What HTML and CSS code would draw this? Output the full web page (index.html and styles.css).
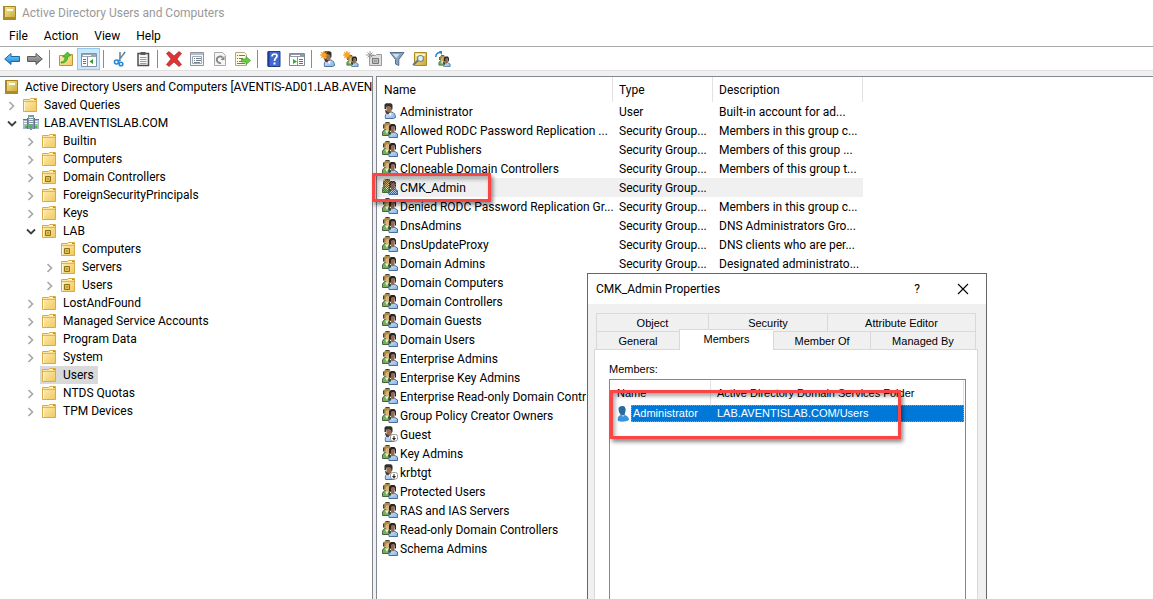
FILE: index.html
```html
<!DOCTYPE html>
<html lang="en">
<head>
<meta charset="utf-8">
<title>Active Directory Users and Computers</title>
<link rel="stylesheet" href="styles.css">
</head>
<body>
<svg class="sprite" aria-hidden="true">
  <defs>
    <linearGradient id="g-folder" x1="0" y1="0" x2="1" y2="1"><stop offset="0" stop-color="#fff0b8"/><stop offset="1" stop-color="#f0c860"/></linearGradient>
    <linearGradient id="g-shirt" x1="0" y1="0" x2="1" y2="1"><stop offset="0" stop-color="#d8ecff"/><stop offset="1" stop-color="#7fb0e6"/></linearGradient>
    <linearGradient id="g-blue" x1="0" y1="0" x2="0" y2="1"><stop offset="0" stop-color="#7fd0fa"/><stop offset="1" stop-color="#1580d4"/></linearGradient>
    <linearGradient id="g-gray" x1="0" y1="0" x2="0" y2="1"><stop offset="0" stop-color="#b4b4b4"/><stop offset="1" stop-color="#6c6c6c"/></linearGradient>
    <linearGradient id="g-book" x1="0" y1="0" x2="1" y2="1"><stop offset="0" stop-color="#f5e6a0"/><stop offset="1" stop-color="#c9a632"/></linearGradient>
    <pattern id="p-dots" width="2" height="2" patternUnits="userSpaceOnUse"><path d="M0 0h1v1H0zM1 1h1v1H1z" fill="#0d6fce"/></pattern>
  </defs>
  <symbol id="book" viewBox="0 0 16 16"><path d="M2 1.5h11.5v13H2z" fill="url(#g-book)" stroke="#a5841f"/><path d="M1 1h2v14H1z" fill="#a88a28"/><path d="M3 12h11v2.5H3z" fill="#b08c20"/><path d="M5 4h6v2H5z" fill="#fffdf0"/></symbol>
  <symbol id="folder" viewBox="0 0 16 16"><path d="M.5 2.5h6l1-1h6v13H.5z" fill="url(#g-folder)" stroke="#d9aa48"/><path d="M8 2h5v1H8z" fill="#fff"/><path d="M11 2h2v1h-2z" fill="#4aa0e8"/><path d="M1 4.5h12" stroke="#e0b755"/><path d="M1.5 5v9" stroke="#fff6d4"/></symbol>
  <symbol id="ou" viewBox="0 0 16 16"><use href="#folder"/><path d="M3.5 7.5h5v5h-5z" fill="#e0c04c" stroke="#8d721c"/><path d="M5.5 9.5h1v1h-1z" fill="#fff3b0" stroke="#a58528" stroke-width=".7"/></symbol>
  <symbol id="domain" viewBox="0 0 16 16"><path d="M5 0h6v14H5z" fill="#8198a8"/><path d="M0 4h5v10H0zM11 4h5v10h-5z" fill="#a7b7c1"/><path d="M6 2.500h4M6 4.500h4M6 6.500h4M6 8.500h4M1 6.500h3M1 8.500h3M12 6.500h3M12 8.500h3" stroke="#eef5f9"/><path d="M4.500 3v11M11.500 3v11M0 4.500h5M11 4.500h5" stroke="#5f7787"/><path d="M2 11h2v2H2zM7 11h2v2H7zM12 11h2v2h-2zM7 14h2v1H7z" fill="#37c62c"/></symbol>
  <symbol id="open" viewBox="0 0 16 16"><path d="M4 6.500l4 4 4-4" fill="none" stroke="#404040" stroke-width="1.800"/></symbol>
  <symbol id="closed" viewBox="0 0 16 16"><path d="M5.500 5l4 4-4 4" fill="none" stroke="#a6a6a6" stroke-width="1.600"/></symbol>
  <symbol id="user" viewBox="0 0 16 16"><path d="M3.500 15.500c-.8-3 .2-5.500 3-6.500h3c3 .500 4 3 4 5.500l-2 1z" fill="url(#g-shirt)" stroke="#41648f" stroke-width=".9"/><path d="M4.500 2.500h5v5.500l-1.500 2.500-2-.500-1.500-3z" fill="#9a7052"/><path d="M2.500 1.500L4 .300h5l1.500 1.500v4l-1 1.700L9 4 7 3 4.500 3.500 4 6H2.500z" fill="#30302e"/><path d="M3 6.500l2 1.500 2.500 2-1.500 1.500-2.500-2z" fill="#4c3a2e"/><path d="M7 10.500l1.200 3 1.300-3.500z" fill="#fff"/></symbol>
  <symbol id="group" viewBox="0 0 16 16"><path d="M.500 13.500V10l2-2.500h5v6z" fill="#78ad5a" stroke="#355c2b" stroke-width=".9"/><path d="M3 2h5v5.500L6 9 3.500 7.500z" fill="#deb17a"/><path d="M1.500 6.500v-4L3.500.500h4l1 1.500v2L6 3 4 3.500 3.500 7z" fill="#a58d4e"/><path d="M1 2.500h1.200v4H1zM3.500 0h4v1h-4z" fill="#453f2e"/><path d="M3 8.500L5 12l1.500-3.500z" fill="#e9f3d8"/><path d="M7 15.500l-.300-3L9 10h3l3.500 2v3.500z" fill="url(#g-shirt)" stroke="#3d6290" stroke-width=".9"/><path d="M8.500 4.500h4v5L11 11.500 9 10z" fill="#98664a"/><path d="M7 8V4l2-2h3.500L14 4v4l-1 1-.500-4.500L10 4.500 9 5v4z" fill="#29241f"/><path d="M7 9l2.500 2-1.500 2.500L6 11z" fill="#2f4f2c"/></symbol>
  <symbol id="group-hot" viewBox="0 0 16 16"><use href="#group"/><path d="M1 6V2l2-2h4l2 2h3l2 3v5l2 2v4H7l-1-2H0v-4z" fill="url(#p-dots)"/></symbol>
  <symbol id="user-off" viewBox="0 0 16 16"><use href="#user"/><rect x="8.500" y="8.500" width="7" height="6.500" rx="2" fill="#fff" stroke="#9a9a9a"/><path d="M11.500 10h1v2H14l-2 2.500L10 12h1.500z" fill="#222"/></symbol>
  <symbol id="member" viewBox="0 0 16 16"><path d="M3 15c-1-4 1-6 4-6h3c3 1 4 3 4 5-3 2-8 2-11 1z" fill="#3c93dc"/><path d="M3.500 3c0-2 1.500-3 4-3s3.500 2 3 5L9.500 9.500H6L4 6z" fill="#296b9e"/><path d="M6 9l2 2 2-2" fill="#8ccaf8"/></symbol>
  <symbol id="back" viewBox="0 0 16 16"><path d="M.7 8L7 2.500v3h8.500v5H7v3z" fill="url(#g-blue)" stroke="#1a69a8"/></symbol>
  <symbol id="forward" viewBox="0 0 16 16"><path d="M15.300 8L9 2.500v3H.500v5H9v3z" fill="url(#g-gray)" stroke="#5b5b5b"/></symbol>
  <symbol id="up" viewBox="0 0 16 16"><path d="M1.500 4.500h6l1-1h6v11h-13z" fill="url(#g-folder)" stroke="#c39436"/><path d="M3 11c3 0 4-2 4-5H4.500L9.500 1l3.500 3.500-3 1C9.500 10 7 12.500 3 12z" fill="#55c829" stroke="#2e8b1b" stroke-width=".6"/></symbol>
  <symbol id="panes" viewBox="0 0 16 16"><path d="M.500 2.500h15v13H.500z" fill="#fff" stroke="#8493a0"/><path d="M1 3h14v3H1z" fill="#9aa8b3"/><path d="M2 4.500h8" stroke="#fff"/><path d="M6.500 6v9" stroke="#8493a0"/><path d="M2 8.500h3M2 10.500h3M2 12.500h3" stroke="#51789c"/><path d="M12 8v5l-3.500-2.500z" fill="#2ca322"/></symbol>
  <symbol id="cut" viewBox="0 0 16 16"><path d="M8 1v9M13 1L6 11" stroke="#5d7b95" stroke-width="1.500" fill="none"/><path d="M12.500 3L8 9" stroke="#bcd4e6" stroke-width=".8"/><circle cx="4.500" cy="11" r="2" fill="none" stroke="#1e8be0" stroke-width="1.600"/><circle cx="9" cy="13" r="1.800" fill="none" stroke="#1e8be0" stroke-width="1.600"/></symbol>
  <symbol id="clip" viewBox="0 0 16 16"><path d="M3 2.500h10.500v12H3z" fill="#f6f6f6" stroke="#4e4e4e" stroke-width="1.500"/><path d="M5.500 1h5v3h-5z" fill="#595959"/><path d="M5 6.500h6.500M5 8.500h6.500M5 10.500h6.500M5 12.500h6.500" stroke="#9c9c9c"/></symbol>
  <symbol id="delete" viewBox="0 0 16 16"><path d="M.500 2.500L3 .500 8 5 13 .500l2.500 2L11 8l4.500 5.500-2.500 2L8 11l-5 4.500L.500 13.500 5 8z" fill="#dc3535" stroke="#ad2525" stroke-width=".7"/></symbol>
  <symbol id="props" viewBox="0 0 16 16"><path d="M1.500 1.500h13v13h-13z" fill="#f5f7f9" stroke="#8c959d"/><path d="M2 2h12v2H2z" fill="#b4bec6"/><path d="M3.500 5.500h9v7h-9z" fill="#fff" stroke="#a1a9af"/><path d="M5 7.500h1M7 7.500h5M5 9.500h1M7 9.500h5M5 11.500h6" stroke="#71808c"/></symbol>
  <symbol id="refresh" viewBox="0 0 16 16"><path d="M2.500 1.500h8l3 3v10h-11z" fill="#f5f5f5" stroke="#aaa"/><path d="M10.500 6.500A3.300 3.300 0 1 0 9 12" fill="none" stroke="#858585" stroke-width="1.800"/><path d="M8.500 9h4V5z" fill="#858585"/></symbol>
  <symbol id="export" viewBox="0 0 16 16"><path d="M.500 1.500h9l2 2v11H.500z" fill="#fffce5" stroke="#b1a984"/><path d="M2 4.500h1M4 4.500h6M2 7.500h1M4 7.500h4M2 10.500h1M4 10.500h4M2 12.500h8" stroke="#7c7660"/><path d="M6.500 8H11V5.500l4.500 4-4.500 4V11H6.500z" fill="#67cf35" stroke="#37992a" stroke-width=".7"/></symbol>
  <symbol id="help" viewBox="0 0 16 16"><path d="M2 .500h12v15H2z" fill="#4169d1" stroke="#213f86"/><path d="M1.500 1h2v14h-2z" fill="#1c3d92"/><path d="M6 5.500c0-3.500 5-3 5-.500C11 7 8.500 7 8.500 10" fill="none" stroke="#fff" stroke-width="1.700"/><path d="M7.500 11.500h2v2h-2z" fill="#fff"/></symbol>
  <symbol id="window" viewBox="0 0 16 16"><path d="M.500 2.500h15v12H.500z" fill="#fff" stroke="#7e8c97"/><path d="M1 3h14v3H1z" fill="#8f9ca6"/><path d="M2 4.500h9" stroke="#fff"/><path d="M4 8v5l4-2.500z" fill="#35ac28"/><path d="M8.500 6v9" stroke="#8d9aa4"/><path d="M10 8.500h4M10 10.500h4M10 12.500h4" stroke="#5d7386"/></symbol>
  <symbol id="star" viewBox="0 0 8 8"><path d="M4 0l.8 2.200L7 1 5.800 3.200 8 4l-2.200.8L7 7 4.800 5.800 4 8l-.8-2.200L1 7l1.200-2.200L0 4l2.200-.8L1 1l2.200 1.200z" fill="#ffa51c" stroke="#e88a00" stroke-width=".4"/></symbol>
  <symbol id="new-user" viewBox="0 0 16 16"><use href="#user" x="1" width="16" height="16"/><use href="#star" width="8" height="8"/></symbol>
  <symbol id="new-group" viewBox="0 0 16 16"><use href="#group" x="3" y="4" width="13" height="12"/><use href="#star" width="8" height="8"/></symbol>
  <symbol id="new-ou" viewBox="0 0 16 16"><path d="M3.500 4.500h6l1-1h5v11h-12z" fill="#ddd" stroke="#999"/><path d="M6.500 7.500h6v5h-6z" fill="#bcbcbc" stroke="#777"/><path d="M8.500 9.500h2v1h-2z" fill="#fff" stroke="#777" stroke-width=".6"/><path d="M4 0v8M0 4h8M1.500 1.500l5 5M6.500 1.500l-5 5" stroke="#999"/></symbol>
  <symbol id="filter" viewBox="0 0 16 16"><path d="M1 1.500h14L9.800 8.500v6L6.500 13V8.500z" fill="#87a3bd" stroke="#56718b"/><path d="M3.500 3h7L7.500 7z" fill="#cfe0ee"/></symbol>
  <symbol id="find" viewBox="0 0 16 16"><path d="M2.500 1.500h12v13h-12z" fill="url(#g-book)" stroke="#b08a1f"/><path d="M4 3h9v2H4z" fill="#fff6cb"/><path d="M6 9.500L1 14" stroke="#68747d" stroke-width="2"/><circle cx="8.500" cy="7.500" r="3" fill="#e3f1fb" stroke="#7a8790" stroke-width="1.200"/></symbol>
  <symbol id="add-to" viewBox="0 0 16 16"><use href="#group" x="3" y="4" width="13" height="12"/><path d="M.8 6c0-4 3-5 5-4" fill="none" stroke="#2b82c4" stroke-width="1.500"/><path d="M4 0h3v4z" fill="#2b82c4"/></symbol>
</svg>

<div class="app">
  <header class="titlebar"><svg class="icon"><use href="#book"/></svg><span>Active Directory Users and Computers</span></header>
  <nav class="menubar"><button>File</button><button>Action</button><button>View</button><button>Help</button></nav>
  <div class="toolbar" role="toolbar">
    <div class="tools"><button aria-label="Back"><svg class="icon"><use href="#back"/></svg></button><button aria-label="Forward"><svg class="icon"><use href="#forward"/></svg></button></div>
    <div class="tools"><button aria-label="Up one level"><svg class="icon"><use href="#up"/></svg></button><button class="pressed" aria-label="Show console tree"><svg class="icon"><use href="#panes"/></svg></button></div>
    <div class="tools"><button aria-label="Cut"><svg class="icon"><use href="#cut"/></svg></button><button aria-label="Paste"><svg class="icon"><use href="#clip"/></svg></button></div>
    <div class="tools"><button aria-label="Delete"><svg class="icon"><use href="#delete"/></svg></button><button aria-label="Properties"><svg class="icon"><use href="#props"/></svg></button><button aria-label="Refresh"><svg class="icon"><use href="#refresh"/></svg></button><button aria-label="Export list"><svg class="icon"><use href="#export"/></svg></button></div>
    <div class="tools"><button aria-label="Help topics"><svg class="icon"><use href="#help"/></svg></button><button aria-label="Action pane"><svg class="icon"><use href="#window"/></svg></button></div>
    <div class="tools"><button aria-label="New user"><svg class="icon"><use href="#new-user"/></svg></button><button aria-label="New group"><svg class="icon"><use href="#new-group"/></svg></button><button aria-label="New organizational unit"><svg class="icon"><use href="#new-ou"/></svg></button><button aria-label="Filter"><svg class="icon"><use href="#filter"/></svg></button><button aria-label="Find"><svg class="icon"><use href="#find"/></svg></button><button aria-label="Add to group"><svg class="icon"><use href="#add-to"/></svg></button></div>
  </div>

  <main class="panes">
    <nav class="tree">
      <div class="row root"><span class="node"><svg class="icon"><use href="#book"/></svg>Active Directory Users and Computers [AVENTIS-AD01.LAB.AVENT</span></div>
      <ul>
        <li><div class="row"><button class="toggle" aria-label="Expand"><svg class="icon"><use href="#closed"/></svg></button><span class="node"><svg class="icon"><use href="#folder"/></svg>Saved Queries</span></div></li>
        <li><div class="row"><button class="toggle" aria-label="Collapse"><svg class="icon"><use href="#open"/></svg></button><span class="node"><svg class="icon"><use href="#domain"/></svg>LAB.AVENTISLAB.COM</span></div>
          <ul>
            <li><div class="row"><button class="toggle" aria-label="Expand"><svg class="icon"><use href="#closed"/></svg></button><span class="node"><svg class="icon"><use href="#folder"/></svg>Builtin</span></div></li>
            <li><div class="row"><button class="toggle" aria-label="Expand"><svg class="icon"><use href="#closed"/></svg></button><span class="node"><svg class="icon"><use href="#folder"/></svg>Computers</span></div></li>
            <li><div class="row"><button class="toggle" aria-label="Expand"><svg class="icon"><use href="#closed"/></svg></button><span class="node"><svg class="icon"><use href="#ou"/></svg>Domain Controllers</span></div></li>
            <li><div class="row"><button class="toggle" aria-label="Expand"><svg class="icon"><use href="#closed"/></svg></button><span class="node"><svg class="icon"><use href="#folder"/></svg>ForeignSecurityPrincipals</span></div></li>
            <li><div class="row"><button class="toggle" aria-label="Expand"><svg class="icon"><use href="#closed"/></svg></button><span class="node"><svg class="icon"><use href="#folder"/></svg>Keys</span></div></li>
            <li><div class="row"><button class="toggle" aria-label="Collapse"><svg class="icon"><use href="#open"/></svg></button><span class="node"><svg class="icon"><use href="#ou"/></svg>LAB</span></div>
              <ul>
                <li><div class="row"><span class="toggle"></span><span class="node"><svg class="icon"><use href="#ou"/></svg>Computers</span></div></li>
                <li><div class="row"><button class="toggle" aria-label="Expand"><svg class="icon"><use href="#closed"/></svg></button><span class="node"><svg class="icon"><use href="#ou"/></svg>Servers</span></div></li>
                <li><div class="row"><button class="toggle" aria-label="Expand"><svg class="icon"><use href="#closed"/></svg></button><span class="node"><svg class="icon"><use href="#ou"/></svg>Users</span></div></li>
              </ul>
            </li>
            <li><div class="row"><button class="toggle" aria-label="Expand"><svg class="icon"><use href="#closed"/></svg></button><span class="node"><svg class="icon"><use href="#folder"/></svg>LostAndFound</span></div></li>
            <li><div class="row"><button class="toggle" aria-label="Expand"><svg class="icon"><use href="#closed"/></svg></button><span class="node"><svg class="icon"><use href="#folder"/></svg>Managed Service Accounts</span></div></li>
            <li><div class="row"><button class="toggle" aria-label="Expand"><svg class="icon"><use href="#closed"/></svg></button><span class="node"><svg class="icon"><use href="#folder"/></svg>Program Data</span></div></li>
            <li><div class="row"><button class="toggle" aria-label="Expand"><svg class="icon"><use href="#closed"/></svg></button><span class="node"><svg class="icon"><use href="#folder"/></svg>System</span></div></li>
            <li><div class="row"><span class="toggle"></span><span class="node selected"><svg class="icon"><use href="#folder"/></svg>Users</span></div></li>
            <li><div class="row"><button class="toggle" aria-label="Expand"><svg class="icon"><use href="#closed"/></svg></button><span class="node"><svg class="icon"><use href="#folder"/></svg>NTDS Quotas</span></div></li>
            <li><div class="row"><button class="toggle" aria-label="Expand"><svg class="icon"><use href="#closed"/></svg></button><span class="node"><svg class="icon"><use href="#folder"/></svg>TPM Devices</span></div></li>
          </ul>
        </li>
      </ul>
    </nav>

    <section class="listing">
      <table class="objects">
        <colgroup><col class="c-name"><col class="c-type"><col class="c-desc"></colgroup>
        <thead><tr><th>Name</th><th>Type</th><th>Description</th></tr></thead>
        <tbody>
          <tr><td><svg class="icon"><use href="#user"/></svg>Administrator</td><td>User</td><td>Built-in account for ad...</td></tr>
          <tr><td><svg class="icon"><use href="#group"/></svg>Allowed RODC Password Replication ...</td><td>Security Group...</td><td>Members in this group c...</td></tr>
          <tr><td><svg class="icon"><use href="#group"/></svg>Cert Publishers</td><td>Security Group...</td><td>Members of this group ...</td></tr>
          <tr><td><svg class="icon"><use href="#group"/></svg>Cloneable Domain Controllers</td><td>Security Group...</td><td>Members of this group t...</td></tr>
          <tr class="current"><td><svg class="icon"><use href="#group-hot"/></svg>CMK_Admin</td><td>Security Group...</td><td></td></tr>
          <tr><td><svg class="icon"><use href="#group"/></svg>Denied RODC Password Replication Gr...</td><td>Security Group...</td><td>Members in this group c...</td></tr>
          <tr><td><svg class="icon"><use href="#group"/></svg>DnsAdmins</td><td>Security Group...</td><td>DNS Administrators Gro...</td></tr>
          <tr><td><svg class="icon"><use href="#group"/></svg>DnsUpdateProxy</td><td>Security Group...</td><td>DNS clients who are per...</td></tr>
          <tr><td><svg class="icon"><use href="#group"/></svg>Domain Admins</td><td>Security Group...</td><td>Designated administrato...</td></tr>
          <tr><td><svg class="icon"><use href="#group"/></svg>Domain Computers</td><td></td><td></td></tr>
          <tr><td><svg class="icon"><use href="#group"/></svg>Domain Controllers</td><td></td><td></td></tr>
          <tr><td><svg class="icon"><use href="#group"/></svg>Domain Guests</td><td></td><td></td></tr>
          <tr><td><svg class="icon"><use href="#group"/></svg>Domain Users</td><td></td><td></td></tr>
          <tr><td><svg class="icon"><use href="#group"/></svg>Enterprise Admins</td><td></td><td></td></tr>
          <tr><td><svg class="icon"><use href="#group"/></svg>Enterprise Key Admins</td><td></td><td></td></tr>
          <tr><td><svg class="icon"><use href="#group"/></svg>Enterprise Read-only Domain Contr</td><td></td><td></td></tr>
          <tr><td><svg class="icon"><use href="#group"/></svg>Group Policy Creator Owners</td><td></td><td></td></tr>
          <tr><td><svg class="icon"><use href="#user-off"/></svg>Guest</td><td></td><td></td></tr>
          <tr><td><svg class="icon"><use href="#group"/></svg>Key Admins</td><td></td><td></td></tr>
          <tr><td><svg class="icon"><use href="#user-off"/></svg>krbtgt</td><td></td><td></td></tr>
          <tr><td><svg class="icon"><use href="#group"/></svg>Protected Users</td><td></td><td></td></tr>
          <tr><td><svg class="icon"><use href="#group"/></svg>RAS and IAS Servers</td><td></td><td></td></tr>
          <tr><td><svg class="icon"><use href="#group"/></svg>Read-only Domain Controllers</td><td></td><td></td></tr>
          <tr><td><svg class="icon"><use href="#group"/></svg>Schema Admins</td><td></td><td></td></tr>
        </tbody>
      </table>
    </section>
  </main>

  <section class="dialog" role="dialog" aria-label="CMK_Admin Properties">
    <header class="dialog-title"><h2>CMK_Admin Properties</h2><button aria-label="Help">?</button><button aria-label="Close"><svg class="close" viewBox="0 0 12 12"><path d="M1 1l10 10M11 1L1 11" stroke="#000" stroke-width="1.100"/></svg></button></header>
    <div class="dialog-body">
      <div class="tabs back-tabs"><button>Object</button><button>Security</button><button>Attribute Editor</button></div>
      <div class="tabs front-tabs"><button>General</button><button class="active">Members</button><button>Member Of</button><button>Managed By</button></div>
      <div class="sheet">
        <p id="members-label">Members:</p>
        <div class="members">
          <table aria-labelledby="members-label">
            <colgroup><col class="m-name"><col></colgroup>
            <thead><tr><th>Name</th><th>Active Directory Domain Services Folder</th></tr></thead>
            <tbody><tr><td><svg class="icon"><use href="#member"/></svg><span>Administrator</span></td><td><span>LAB.AVENTISLAB.COM/Users</span></td></tr></tbody>
          </table>
        </div>
      </div>
    </div>
  </section>
  <div class="mark mark-group"></div>
  <div class="mark mark-member"></div>
</div>
</body>
</html>
```
FILE: styles.css
```css
* { box-sizing: border-box; }
body { margin: 0; background: #fff; color: #000; font: 12px/18px Roboto, "Open Sans", sans-serif; }
button { margin: 0; padding: 0; border: 0; background: none; color: inherit; font: inherit; }
ul { margin: 0; padding: 0; list-style: none; }
table { border-collapse: separate; border-spacing: 0; table-layout: fixed; }
th { font-weight: normal; text-align: left; }
.sprite { position: absolute; width: 0; height: 0; }
.icon { display: block; flex: none; width: 16px; height: 16px; }
.app { position: relative; display: flex; flex-direction: column; height: 100vh; overflow: hidden; }

.titlebar { display: flex; align-items: center; gap: 4px; height: 25px; padding-left: 2px; color: #999; }
.menubar { display: flex; gap: 16px; height: 21px; padding-left: 9px; }
.toolbar { display: flex; height: 25px; padding-top: 1px; border-top: 1px solid #a8a8a8; border-bottom: 1px solid #e0e0e0; }
.tools { display: flex; align-items: center; }
.tools + .tools::before { content: ""; width: 1px; height: 18px; margin: 0 4px 0 3px; background: #8c8c8c; }
.tools button { display: flex; align-items: center; justify-content: center; width: 23px; height: 22px; }
.tools .pressed { border: 1px solid #90c8f6; background: #cce8ff; }

.panes { display: flex; flex: 1; min-height: 0; gap: 3px; padding-top: 5px; background: #f0f0f0; }
.tree { flex: none; width: 373px; padding: 1px 0 0 2px; overflow: hidden; border-top: 1px solid #828790; border-right: 1px solid #828790; background: #fff; white-space: nowrap; }
.tree ul ul { padding-left: 19px; }
.row { display: flex; height: 18px; }
.toggle { display: flex; flex: none; align-items: center; justify-content: center; width: 19px; }
.node { display: flex; align-items: center; gap: 5px; padding: 0 4px 0 2px; }
.selected { background: #d9d9d9; }

.listing { flex: 1; min-width: 0; overflow: hidden; border-top: 1px solid #828790; border-left: 1px solid #828790; background: #fff; }
.objects { width: 486px; white-space: nowrap; }
.c-name { width: 236px; }
.c-type { width: 100px; }
.c-desc { width: 150px; }
.objects th { height: 25px; padding: 0 0 0 6px; border-right: 1px solid #e2e2e2; }
.objects th:first-child { padding-left: 7px; }
.objects td { height: 19px; padding: 0 0 0 6px; overflow: hidden; }
.objects td:first-child { padding-left: 5px; }
.objects td .icon { float: left; margin: 0 2px 0 0; }
.current { background: #f0f0f0; }

.dialog { position: absolute; top: 273px; bottom: 0; left: 587px; display: flex; flex-direction: column; width: 400px; border: 1px solid #666; border-bottom: 0; background: #f0f0f0; }
.dialog-title { display: flex; align-items: center; height: 30px; padding-left: 8px; background: #fff; }
.dialog-title h2 { flex: 1; margin: 0; font-size: 12px; font-weight: normal; }
.dialog-title button { display: flex; align-items: center; justify-content: center; width: 46px; height: 30px; }
.close { width: 12px; height: 12px; }
.dialog-body { display: flex; flex: 1; flex-direction: column; padding: 9px 8px 0 6px; font: 11px/14px "Liberation Sans", Arial, sans-serif; }
.tabs { display: grid; margin: 0 2px; }
.tabs button { height: 18px; border: 1px solid #d9d9d9; border-bottom: 0; border-right: 0; background: #f0f0f0; }
.tabs button:last-child { border-right: 1px solid #d9d9d9; }
.back-tabs { grid-template-columns: 112fr 119fr 149fr; }
.front-tabs { grid-template-columns: 83fr 94fr 97fr 106fr; }
.front-tabs .active { height: 21px; margin: -2px 0 -1px; padding-bottom: 2px; z-index: 1; background: #fff; }
.sheet { display: flex; flex: 1; flex-direction: column; padding: 12px 11px 0 14px; border: 1px solid #d9d9d9; border-bottom: 0; background: #fff; }
.sheet p { margin: 0 0 3px; }
.members { flex: 1; padding-right: 1px; border: 1px solid #828790; border-bottom: 0; }
.members table { width: 100%; white-space: nowrap; }
.m-name { width: 101px; }
.members th { height: 25px; padding: 0 0 0 7px; border-right: 1px solid #e2e2e2; }
.members th + th { padding-left: 6px; }
.members td { height: 17px; padding: 0; }
.members td:first-child { display: flex; align-items: center; padding-left: 5px; }
.members td span { display: block; flex: 1; height: 17px; padding-left: 1px; border: 1px dotted #e08a35; border-right: 0; background: #0078d7; color: #fff; line-height: 15px; }
.members td + td span { padding-left: 6px; border-left: 0; border-right: 1px dotted #e08a35; }

.mark { position: absolute; border: 3px solid #f94545; box-shadow: 2px 3px 4px rgba(0, 0, 0, .45), inset 2px 3px 4px rgba(0, 0, 0, .35); pointer-events: none; }
.mark-group { top: 173px; left: 372px; width: 119px; height: 29px; }
.mark-member { top: 390px; left: 610px; width: 291px; height: 49px; }
```
